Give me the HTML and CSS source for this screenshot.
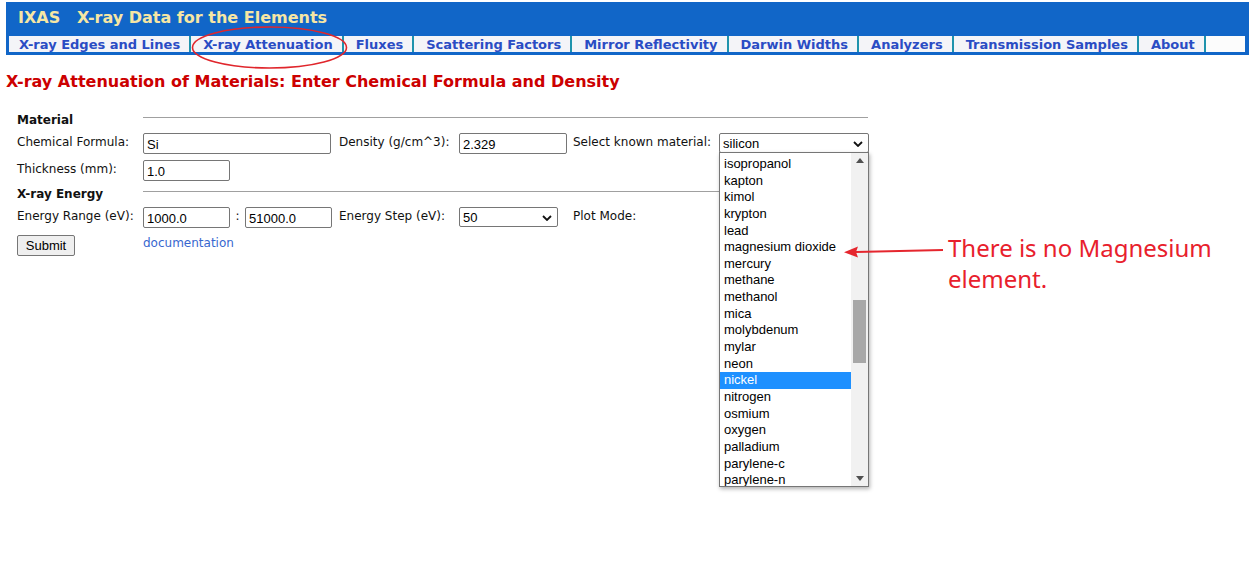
FILE: index.html
```html
<!DOCTYPE html>
<html>
<head>
<meta charset="utf-8">
<title>IXAS X-ray Data for the Elements</title>
<link rel="stylesheet" href="styles.css">
</head>
<body>
<div class="page">
  <div class="topbar">
    <div class="site-title">IXAS&nbsp;&nbsp; X-ray Data for the Elements</div>
    <div class="tabs">
      <a class="tab">X-ray Edges and Lines</a>
      <a class="tab">X-ray Attenuation</a>
      <a class="tab">Fluxes</a>
      <a class="tab">Scattering Factors</a>
      <a class="tab">Mirror Reflectivity</a>
      <a class="tab">Darwin Widths</a>
      <a class="tab">Analyzers</a>
      <a class="tab">Transmission Samples</a>
      <a class="tab">About</a>
    </div>
  </div>

  <h2 class="page-heading">X-ray Attenuation of Materials: Enter Chemical Formula and Density</h2>

  <div class="form-grid">
    <div class="section-label">Material</div>
    <div class="rule"></div>

    <div class="lbl">Chemical Formula:</div>
    <div class="cell"><input class="inp w-formula" type="text" value="Si"></div>
    <div class="lbl">Density (g/cm^3):</div>
    <div class="cell"><input class="inp w-density" type="text" value="2.329"></div>
    <div class="lbl">Select known material:</div>
    <div class="cell"><span class="sel w-material"><span class="sel-text">silicon</span><svg class="chev" viewBox="0 0 10 6" width="10" height="6"><path d="M1 1 L5 5 L9 1" fill="none" stroke="#111" stroke-width="1.8"/></svg></span></div>

    <div class="lbl">Thickness (mm):</div>
    <div class="cell span5"><input class="inp w-short" type="text" value="1.0"></div>

    <div class="section-label">X-ray Energy</div>
    <div class="rule"></div>

    <div class="lbl">Energy Range (eV):</div>
    <div class="cell range"><input class="inp w-short" type="text" value="1000.0"><span class="colon">:</span><input class="inp w-short" type="text" value="51000.0"></div>
    <div class="lbl">Energy Step (eV):</div>
    <div class="cell"><span class="sel w-step"><span class="sel-text">50</span><svg class="chev" viewBox="0 0 10 6" width="10" height="6"><path d="M1 1 L5 5 L9 1" fill="none" stroke="#111" stroke-width="1.8"/></svg></span></div>
    <div class="lbl">Plot Mode:</div>
    <div class="cell"></div>

    <div class="cell"><button class="btn" type="button">Submit</button></div>
    <div class="cell span5"><a class="doc-link">documentation</a></div>
  </div>
</div>

<div class="dropdown">
  <div class="options">
    <div class="opt">isopropanol</div>
    <div class="opt">kapton</div>
    <div class="opt">kimol</div>
    <div class="opt">krypton</div>
    <div class="opt">lead</div>
    <div class="opt">magnesium dioxide</div>
    <div class="opt">mercury</div>
    <div class="opt">methane</div>
    <div class="opt">methanol</div>
    <div class="opt">mica</div>
    <div class="opt">molybdenum</div>
    <div class="opt">mylar</div>
    <div class="opt">neon</div>
    <div class="opt selected">nickel</div>
    <div class="opt">nitrogen</div>
    <div class="opt">osmium</div>
    <div class="opt">oxygen</div>
    <div class="opt">palladium</div>
    <div class="opt">parylene-c</div>
    <div class="opt">parylene-n</div>
  </div>
  <div class="scrollbar">
    <svg class="sb-arrow" viewBox="0 0 8 5" width="8" height="5"><path d="M0 5 L4 0 L8 5 Z" fill="#505050"/></svg>
    <div class="sb-track"><div class="sb-thumb"></div></div>
    <svg class="sb-arrow" viewBox="0 0 8 5" width="8" height="5"><path d="M0 0 L4 5 L8 0 Z" fill="#505050"/></svg>
  </div>
</div>

<svg class="annot-svg" width="1249" height="574" viewBox="0 0 1249 574">
  <ellipse cx="269.5" cy="47.5" rx="77" ry="20.5" fill="none" stroke="#e0262c" stroke-width="1.6"/>
  <line x1="943" y1="250" x2="856" y2="252" stroke="#e5262e" stroke-width="2"/>
  <path d="M844 252.3 L858 246.5 L856 252 L858 257.5 Z" fill="#e5262e"/>
</svg>
<div class="annot-text">There is no Magnesium<br>element.</div>
</body>
</html>
```

FILE: styles.css
```css
html, body {
  margin: 0;
  padding: 0;
  background: #ffffff;
}

body {
  font-family: "DejaVu Sans", Verdana, sans-serif;
  font-size: 12px;
  color: #111;
}

.page {
  padding: 2px 0 0 6px;
}

.topbar {
  background: #1166c8;
  padding: 0 4px 0 3px;
}

.site-title {
  height: 34px;
  line-height: 31px;
  padding-left: 9px;
  font-size: 16px;
  font-weight: bold;
  color: #f6e6a4;
  box-sizing: border-box;
}

.tabs {
  display: flex;
  background: #fcfcfc;
  height: 16px;
  border-bottom: 3px solid #1166c8;
}

.tab {
  display: block;
  background: #f4f4f8;
  padding: 0 9px 0 12px;
  border-right: 2px solid #1f93ad;
  font-size: 13px;
  font-weight: bold;
  line-height: 17px;
  color: #2a4cc4;
  white-space: nowrap;
}

.tab:first-child {
  padding-left: 10px;
}

.page-heading {
  margin: 17px 0 0 0;
  font-size: 16px;
  font-weight: bold;
  color: #cc0000;
  line-height: 20px;
}

.form-grid {
  display: grid;
  grid-template-columns: 126px 196px 120px 114px 146px 149px;
  grid-auto-rows: auto;
  margin: 21px 0 0 11px;
  width: 851px;
}

.section-label {
  font-weight: bold;
  font-size: 12px;
  height: 14px;
  line-height: 14px;
  margin-bottom: 6px;
}

.rule {
  grid-column: 2 / 7;
  border-top: 1px solid #a0a0a0;
  height: 0;
  margin-top: 4px;
}

.lbl {
  font-size: 12px;
  line-height: 14px;
  padding-top: 2px;
  white-space: nowrap;
  color: #111;
}

.cell {
  height: 27px;
}

.span5 {
  grid-column: 2 / 7;
}

.range {
  display: flex;
  align-items: flex-start;
}

.colon {
  width: 15px;
  text-align: center;
  font-size: 12px;
  line-height: 14px;
  padding-top: 2px;
}

.inp {
  box-sizing: border-box;
  height: 21px;
  border: 1px solid #767676;
  border-radius: 2px;
  padding: 2px 3px 0 3px;
  font-family: "Liberation Sans", Arial, sans-serif;
  font-size: 13px;
  color: #000;
  background: #fff;
  margin: 0;
  outline: none;
}

.w-formula { width: 188px; }
.w-density { width: 108px; }
.w-short { width: 87px; }

.sel {
  box-sizing: border-box;
  display: flex;
  align-items: center;
  justify-content: space-between;
  height: 20px;
  border: 1px solid #767676;
  border-radius: 2px;
  padding: 1px 5px 0 3px;
  font-family: "Liberation Sans", Arial, sans-serif;
  font-size: 13px;
  color: #000;
  background: #fff;
}

.w-material { width: 150px; }
.w-step { width: 99px; }

.btn {
  box-sizing: border-box;
  height: 21px;
  width: 58px;
  padding: 0;
  border: 1px solid #767676;
  border-radius: 2px;
  background: #efefef;
  font-family: "Liberation Sans", Arial, sans-serif;
  font-size: 13px;
  color: #000;
  margin-top: 1px;
}

.doc-link {
  display: block;
  font-size: 12px;
  line-height: 14px;
  padding-top: 2px;
  color: #3767cf;
}

.dropdown {
  position: absolute;
  left: 719px;
  top: 152px;
  width: 150px;
  height: 335px;
  box-sizing: border-box;
  border: 1px solid #767676;
  background: #fff;
  box-shadow: 1px 2px 4px rgba(0, 0, 0, 0.3);
  display: flex;
  overflow: hidden;
}

.options {
  flex: 1;
  padding-top: 3px;
  overflow: hidden;
}

.opt {
  height: 16.65px;
  line-height: 16px;
  padding-left: 4px;
  font-family: "Liberation Sans", Arial, sans-serif;
  font-size: 13px;
  color: #000;
  white-space: nowrap;
}

.opt.selected {
  background: #1e90ff;
  color: #fff;
}

.scrollbar {
  width: 17px;
  background: #f1f1f1;
  display: flex;
  flex-direction: column;
  align-items: center;
}

.sb-arrow {
  flex: none;
  margin: 5px 0;
}

.sb-track {
  flex: 1;
  width: 100%;
  padding-top: 132px;
  box-sizing: border-box;
}

.sb-thumb {
  width: 13px;
  height: 63px;
  margin-left: 2px;
  background: #a8a8a8;
}

.annot-svg {
  position: absolute;
  left: 0;
  top: 0;
  pointer-events: none;
}

.annot-text {
  position: absolute;
  left: 948px;
  top: 232px;
  font-family: "Noto Sans", "Open Sans", sans-serif;
  font-size: 24px;
  line-height: 31px;
  color: #e8202c;
}
```
